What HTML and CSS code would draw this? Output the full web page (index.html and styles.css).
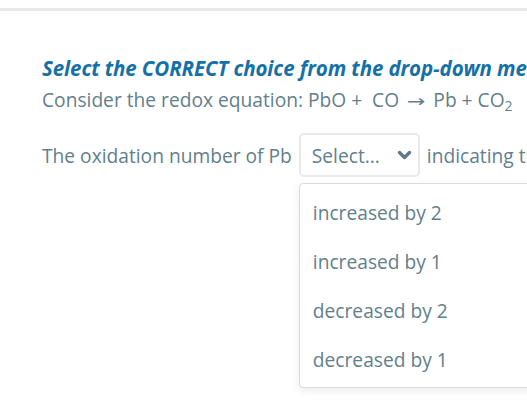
FILE: index.html
```html
<!DOCTYPE html>
<html>
<head>
<meta charset="utf-8">
<link rel="stylesheet" href="styles.css">
</head>
<body>
<div class="topbar"></div>
<main class="content">
  <h2 class="title">Select the CORRECT choice from the drop-down menu</h2>
  <p class="equation">Consider the redox equation: PbO +&nbsp; CO <span class="arrow">&rarr;</span> Pb + CO<sub>2</sub></p>
  <div class="question">
    <span class="qtext">The oxidation number of Pb</span>
    <div class="select-wrap">
      <div class="select">
        <span>Select...</span>
        <svg class="chev" width="15" height="11" viewBox="0 0 15 11"><path d="M2.5 2.5 L7.5 7.5 L12.5 2.5" fill="none" stroke="#5d7a86" stroke-width="3.4" stroke-linecap="round" stroke-linejoin="round"/></svg>
      </div>
      <ul class="menu">
        <li>increased by 2</li>
        <li>increased by 1</li>
        <li>decreased by 2</li>
        <li>decreased by 1</li>
      </ul>
    </div>
    <span class="qtext">indicating that PbO is reduced.</span>
  </div>
</main>
</body>
</html>
```
FILE: styles.css
```css
html, body {
  margin: 0;
  padding: 0;
  background: #fff;
  overflow: hidden;
  width: 527px;
  height: 407px;
}
body {
  font-family: "Open Sans", "Noto Sans", sans-serif;
  color: #62808c;
}
.topbar {
  margin-top: 8px;
  height: 3px;
  background: #e8e8e8;
}
.content {
  padding: 0 0 0 42px;
  white-space: nowrap;
}
.title {
  margin: 44px 0 0 0;
  font-size: 20.5px;
  font-weight: 700;
  font-style: italic;
  color: #1670a8;
  line-height: 26px;
  letter-spacing: -0.1px;
}
.equation {
  margin: 6px 0 0 0;
  font-size: 19.2px;
  line-height: 26px;
}
.arrow {
  font-family: "DejaVu Sans", sans-serif;
  font-size: 17px;
  display: inline-block;
  transform: scaleX(1.3);
  margin: 0 5px;
}
.equation sub {
  font-size: 14px;
  vertical-align: -4px;
  line-height: 0;
}
.question {
  margin-top: 19px;
  display: flex;
  align-items: center;
  gap: 7px;
  font-size: 19.2px;
}
.select-wrap {
  position: relative;
}
.select {
  box-sizing: border-box;
  width: 121px;
  height: 44px;
  border: 2px solid #e9e9e9;
  border-radius: 5px;
  display: flex;
  align-items: center;
  justify-content: space-between;
  padding: 0 6px 0 11px;
}
.chev { margin-top: 1px; }
.menu {
  position: absolute;
  left: 0;
  top: 50px;
  width: 260px;
  margin: 0;
  padding: 4px 0 3px;
  list-style: none;
  background: #fff;
  border: 1px solid #dcdcdc;
  border-radius: 4px;
  box-shadow: 0 3px 8px rgba(0,0,0,0.08);
}
.menu li {
  height: 49px;
  line-height: 49px;
  padding-left: 13px;
  font-size: 19.2px;
}
```
